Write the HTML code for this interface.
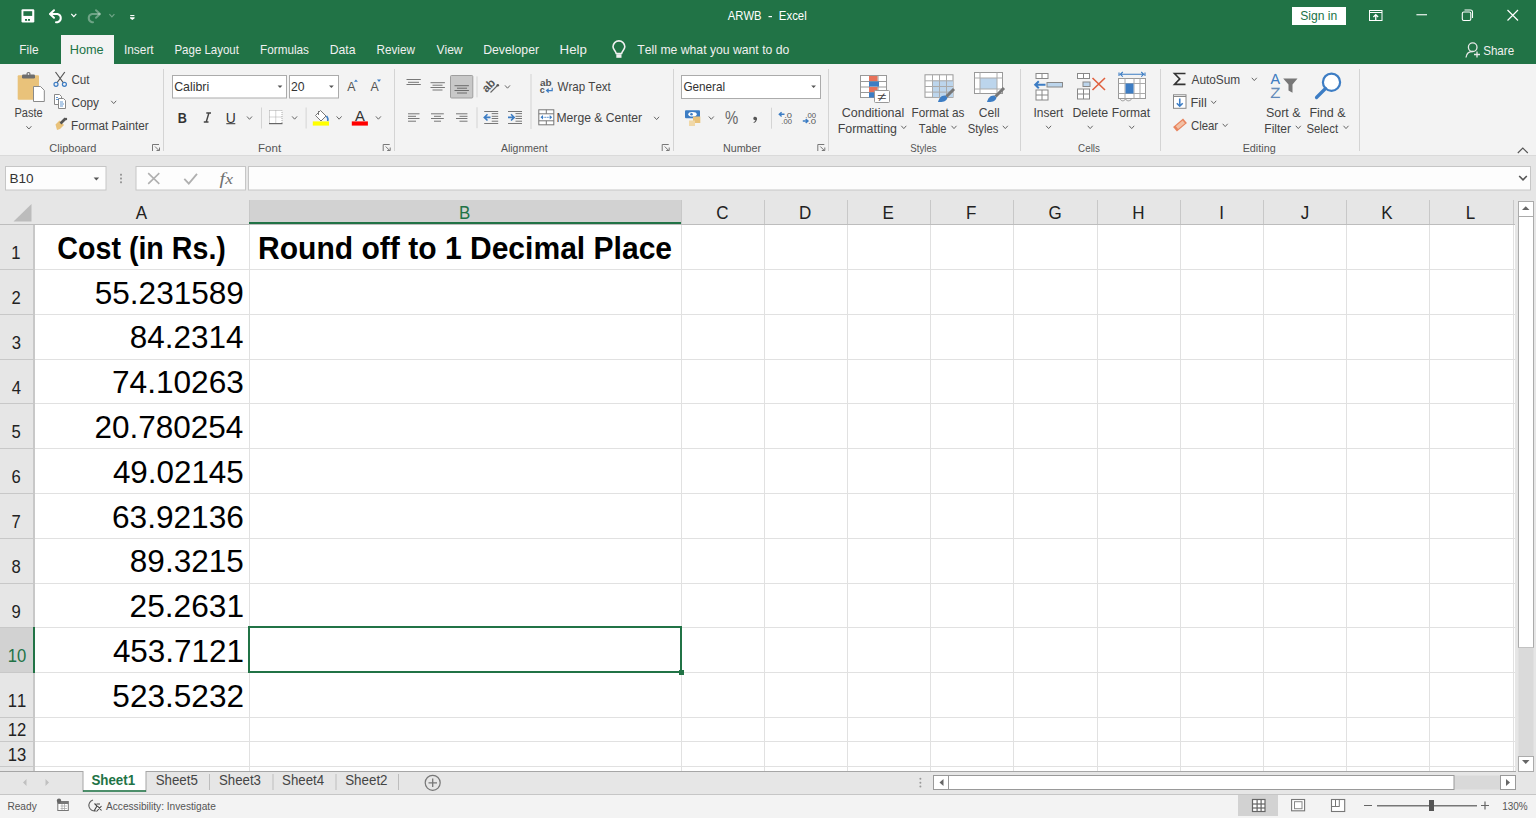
<!DOCTYPE html>
<html><head><meta charset="utf-8"><title>ARWB - Excel</title>
<style>
html,body{margin:0;padding:0;background:#e6e6e6;}
body{width:1536px;height:818px;overflow:hidden;}
svg{display:block;}
text{font-family:"Liberation Sans",sans-serif;font-kerning:none;white-space:pre;}
</style></head><body>
<svg width="1536" height="818" viewBox="0 0 1536 818">
<rect x="0" y="0" width="1536" height="64" fill="#217346" />
<rect x="0" y="64" width="1536" height="91" fill="#f3f3f3" />
<rect x="0" y="155" width="1536" height="1" fill="#dadada" />
<rect x="0" y="156" width="1536" height="615" fill="#e6e6e6" />
<rect x="61" y="35" width="53" height="30" fill="#f3f3f3" />
<g transform="translate(727.80 20.00) scale(0.9018 1.0000)"><text x="-0.02" y="0" font-size="12.50" font-weight="normal" fill="#ffffff">ARWB</text></g>
<rect x="768.5" y="16" width="3.5" height="1.2" fill="#ffffff" />
<g transform="translate(779.80 20.00) scale(0.9127 1.0000)"><text x="-1.03" y="0" font-size="12.50" font-weight="normal" fill="#ffffff">Excel</text></g>
<rect x="1292" y="7" width="54" height="18" fill="#ffffff" />
<g transform="translate(1300.80 20.00) scale(0.9690 1.0000)"><text x="-0.57" y="0" font-size="12.50" font-weight="normal" fill="#217346">Sign in</text></g>
<g transform="translate(20.30 54.00) scale(0.8914 1.0000)"><text x="-1.10" y="0" font-size="13.37" font-weight="normal" fill="#f0f0f0">File</text></g>
<g transform="translate(125.00 54.00) scale(0.8906 1.0000)"><text x="-1.23" y="0" font-size="13.37" font-weight="normal" fill="#f0f0f0">Insert</text></g>
<g transform="translate(175.40 54.00) scale(0.8593 1.0000)"><text x="-1.10" y="0" font-size="13.37" font-weight="normal" fill="#f0f0f0">Page Layout</text></g>
<g transform="translate(261.00 54.00) scale(0.8791 1.0000)"><text x="-1.10" y="0" font-size="13.37" font-weight="normal" fill="#f0f0f0">Formulas</text></g>
<g transform="translate(330.70 54.00) scale(0.9135 1.0000)"><text x="-1.10" y="0" font-size="13.37" font-weight="normal" fill="#f0f0f0">Data</text></g>
<g transform="translate(377.50 54.00) scale(0.8766 1.0000)"><text x="-1.10" y="0" font-size="13.37" font-weight="normal" fill="#f0f0f0">Review</text></g>
<g transform="translate(436.50 54.00) scale(0.9013 1.0000)"><text x="-0.06" y="0" font-size="13.37" font-weight="normal" fill="#f0f0f0">View</text></g>
<g transform="translate(484.20 54.00) scale(0.9173 1.0000)"><text x="-1.10" y="0" font-size="13.37" font-weight="normal" fill="#f0f0f0">Developer</text></g>
<g transform="translate(560.70 54.00) scale(0.9906 1.0000)"><text x="-1.10" y="0" font-size="13.37" font-weight="normal" fill="#f0f0f0">Help</text></g>
<g transform="translate(637.60 54.00) scale(0.9135 1.0000)"><text x="-0.30" y="0" font-size="13.37" font-weight="normal" fill="#f0f0f0">Tell me what you want to do</text></g>
<g transform="translate(1483.70 55.00) scale(0.8671 1.0000)"><text x="-0.61" y="0" font-size="13.37" font-weight="normal" fill="#f0f0f0">Share</text></g>
<g transform="translate(70.80 54.00) scale(0.9506 1.0000)"><text x="-1.10" y="0" font-size="13.37" font-weight="normal" fill="#217346">Home</text></g>
<g transform="translate(72.00 83.70) scale(0.9568 1.0000)"><text x="-0.62" y="0" font-size="12.21" font-weight="normal" fill="#444444">Cut</text></g>
<g transform="translate(72.00 106.60) scale(0.9692 1.0000)"><text x="-0.62" y="0" font-size="12.21" font-weight="normal" fill="#444444">Copy</text></g>
<g transform="translate(72.00 129.60) scale(0.9618 1.0000)"><text x="-1.00" y="0" font-size="12.21" font-weight="normal" fill="#444444">Format Painter</text></g>
<g transform="translate(15.40 116.50) scale(0.9030 1.0000)"><text x="-1.00" y="0" font-size="12.21" font-weight="normal" fill="#444444">Paste</text></g>
<g transform="translate(557.50 91.20) scale(0.9490 1.0000)"><text x="-0.05" y="0" font-size="12.21" font-weight="normal" fill="#444444">Wrap Text</text></g>
<g transform="translate(557.50 122.20) scale(0.9944 1.0000)"><text x="-1.00" y="0" font-size="12.21" font-weight="normal" fill="#444444">Merge &amp; Center</text></g>
<g transform="translate(1191.50 83.70) scale(0.9718 1.0000)"><text x="-0.02" y="0" font-size="12.21" font-weight="normal" fill="#444444">AutoSum</text></g>
<g transform="translate(1191.50 106.60) scale(1.0452 1.0000)"><text x="-1.00" y="0" font-size="12.21" font-weight="normal" fill="#444444">Fill</text></g>
<g transform="translate(1191.50 129.60) scale(0.9346 1.0000)"><text x="-0.62" y="0" font-size="12.21" font-weight="normal" fill="#444444">Clear</text></g>
<g transform="translate(842.30 116.70) scale(1.0259 1.0000)"><text x="-0.62" y="0" font-size="12.21" font-weight="normal" fill="#444444">Conditional</text></g>
<g transform="translate(838.70 132.60) scale(1.0165 1.0000)"><text x="-1.00" y="0" font-size="12.21" font-weight="normal" fill="#444444">Formatting</text></g>
<g transform="translate(912.50 116.70) scale(0.9624 1.0000)"><text x="-1.00" y="0" font-size="12.21" font-weight="normal" fill="#444444">Format as</text></g>
<g transform="translate(919.00 132.60) scale(0.9083 1.0000)"><text x="-0.27" y="0" font-size="12.21" font-weight="normal" fill="#444444">Table</text></g>
<g transform="translate(979.30 116.70) scale(0.9951 1.0000)"><text x="-0.62" y="0" font-size="12.21" font-weight="normal" fill="#444444">Cell</text></g>
<g transform="translate(968.20 132.60) scale(0.9240 1.0000)"><text x="-0.55" y="0" font-size="12.21" font-weight="normal" fill="#444444">Styles</text></g>
<g transform="translate(1034.60 116.70) scale(0.9789 1.0000)"><text x="-1.13" y="0" font-size="12.21" font-weight="normal" fill="#444444">Insert</text></g>
<g transform="translate(1073.40 116.70) scale(1.0163 1.0000)"><text x="-1.00" y="0" font-size="12.21" font-weight="normal" fill="#444444">Delete</text></g>
<g transform="translate(1112.80 116.70) scale(0.9900 1.0000)"><text x="-1.00" y="0" font-size="12.21" font-weight="normal" fill="#444444">Format</text></g>
<g transform="translate(1266.50 116.70) scale(1.0216 1.0000)"><text x="-0.55" y="0" font-size="12.21" font-weight="normal" fill="#444444">Sort &amp;</text></g>
<g transform="translate(1265.30 132.60) scale(0.9835 1.0000)"><text x="-1.00" y="0" font-size="12.21" font-weight="normal" fill="#444444">Filter</text></g>
<g transform="translate(1310.40 116.70) scale(1.0236 1.0000)"><text x="-1.00" y="0" font-size="12.21" font-weight="normal" fill="#444444">Find &amp;</text></g>
<g transform="translate(1306.90 132.60) scale(0.9342 1.0000)"><text x="-0.55" y="0" font-size="12.21" font-weight="normal" fill="#444444">Select</text></g>
<g transform="translate(49.90 151.80) scale(0.9477 1.0000)"><text x="-0.59" y="0" font-size="11.63" font-weight="normal" fill="#555555">Clipboard</text></g>
<g transform="translate(259.00 151.80) scale(0.9897 1.0000)"><text x="-0.95" y="0" font-size="11.63" font-weight="normal" fill="#555555">Font</text></g>
<g transform="translate(501.00 151.80) scale(0.9012 1.0000)"><text x="-0.02" y="0" font-size="11.63" font-weight="normal" fill="#555555">Alignment</text></g>
<g transform="translate(723.80 151.80) scale(0.9251 1.0000)"><text x="-0.95" y="0" font-size="11.63" font-weight="normal" fill="#555555">Number</text></g>
<g transform="translate(910.70 151.80) scale(0.8334 1.0000)"><text x="-0.53" y="0" font-size="11.63" font-weight="normal" fill="#555555">Styles</text></g>
<g transform="translate(1078.60 151.80) scale(0.8456 1.0000)"><text x="-0.59" y="0" font-size="11.63" font-weight="normal" fill="#555555">Cells</text></g>
<g transform="translate(1243.50 151.80) scale(0.9305 1.0000)"><text x="-0.95" y="0" font-size="11.63" font-weight="normal" fill="#555555">Editing</text></g>
<rect x="163" y="69" width="1" height="82" fill="#d4d4d4" />
<rect x="394" y="69" width="1" height="82" fill="#d4d4d4" />
<rect x="673" y="69" width="1" height="82" fill="#d4d4d4" />
<rect x="828" y="69" width="1" height="82" fill="#d4d4d4" />
<rect x="1020" y="69" width="1" height="82" fill="#d4d4d4" />
<rect x="1160" y="69" width="1" height="82" fill="#d4d4d4" />
<rect x="1359" y="69" width="1" height="82" fill="#d4d4d4" />
<rect x="5.5" y="166.5" width="100.5" height="23.5" fill="#fdfdfd" stroke="#c6c6c6" stroke-width="1"/>
<g transform="translate(10.50 183.00) scale(1.0372 1.0000)"><text x="-1.07" y="0" font-size="13.08" font-weight="normal" fill="#333333">B10</text></g>
<rect x="136" y="166.5" width="109.5" height="23.5" fill="#fdfdfd" stroke="#c6c6c6" stroke-width="1"/>
<rect x="248.5" y="166.5" width="1282" height="23.5" fill="#fdfdfd" stroke="#c6c6c6" stroke-width="1"/>
<rect x="34" y="225" width="1481" height="546" fill="#ffffff" />
<rect x="249" y="225" width="1" height="546" fill="#e1e1e1" />
<rect x="681" y="225" width="1" height="546" fill="#e1e1e1" />
<rect x="764" y="225" width="1" height="546" fill="#e1e1e1" />
<rect x="847" y="225" width="1" height="546" fill="#e1e1e1" />
<rect x="930" y="225" width="1" height="546" fill="#e1e1e1" />
<rect x="1013" y="225" width="1" height="546" fill="#e1e1e1" />
<rect x="1097" y="225" width="1" height="546" fill="#e1e1e1" />
<rect x="1180" y="225" width="1" height="546" fill="#e1e1e1" />
<rect x="1263" y="225" width="1" height="546" fill="#e1e1e1" />
<rect x="1346" y="225" width="1" height="546" fill="#e1e1e1" />
<rect x="1429" y="225" width="1" height="546" fill="#e1e1e1" />
<rect x="1513" y="225" width="1" height="546" fill="#e1e1e1" />
<rect x="34" y="269" width="1481" height="1" fill="#e1e1e1" />
<rect x="34" y="314" width="1481" height="1" fill="#e1e1e1" />
<rect x="34" y="359" width="1481" height="1" fill="#e1e1e1" />
<rect x="34" y="403" width="1481" height="1" fill="#e1e1e1" />
<rect x="34" y="448" width="1481" height="1" fill="#e1e1e1" />
<rect x="34" y="493" width="1481" height="1" fill="#e1e1e1" />
<rect x="34" y="538" width="1481" height="1" fill="#e1e1e1" />
<rect x="34" y="583" width="1481" height="1" fill="#e1e1e1" />
<rect x="34" y="627" width="1481" height="1" fill="#e1e1e1" />
<rect x="34" y="672" width="1481" height="1" fill="#e1e1e1" />
<rect x="34" y="717" width="1481" height="1" fill="#e1e1e1" />
<rect x="34" y="741" width="1481" height="1" fill="#e1e1e1" />
<rect x="34" y="766" width="1481" height="1" fill="#e1e1e1" />
<rect x="249" y="200" width="432" height="24" fill="#d2d2d2" />
<rect x="249" y="200" width="1" height="24" fill="#c8c8c8" />
<rect x="681" y="200" width="1" height="24" fill="#c8c8c8" />
<rect x="764" y="200" width="1" height="24" fill="#c8c8c8" />
<rect x="847" y="200" width="1" height="24" fill="#c8c8c8" />
<rect x="930" y="200" width="1" height="24" fill="#c8c8c8" />
<rect x="1013" y="200" width="1" height="24" fill="#c8c8c8" />
<rect x="1097" y="200" width="1" height="24" fill="#c8c8c8" />
<rect x="1180" y="200" width="1" height="24" fill="#c8c8c8" />
<rect x="1263" y="200" width="1" height="24" fill="#c8c8c8" />
<rect x="1346" y="200" width="1" height="24" fill="#c8c8c8" />
<rect x="1429" y="200" width="1" height="24" fill="#c8c8c8" />
<rect x="1513" y="200" width="1" height="24" fill="#c8c8c8" />
<rect x="0" y="224" width="1515" height="1" fill="#bdbdbd" />
<rect x="249" y="222" width="432" height="2" fill="#217346" />
<g transform="translate(135.86 219.00) scale(0.9000 1.0000)"><text x="-0.04" y="0" font-size="18.90" font-weight="normal" fill="#222222">A</text></g>
<g transform="translate(460.47 219.00) scale(0.9000 1.0000)"><text x="-1.55" y="0" font-size="18.90" font-weight="normal" fill="#217346">B</text></g>
<g transform="translate(717.12 219.00) scale(0.9000 1.0000)"><text x="-0.96" y="0" font-size="18.90" font-weight="normal" fill="#222222">C</text></g>
<g transform="translate(800.46 219.00) scale(0.9000 1.0000)"><text x="-1.55" y="0" font-size="18.90" font-weight="normal" fill="#222222">D</text></g>
<g transform="translate(883.89 219.00) scale(0.9000 1.0000)"><text x="-1.55" y="0" font-size="18.90" font-weight="normal" fill="#222222">E</text></g>
<g transform="translate(967.34 219.00) scale(0.9000 1.0000)"><text x="-1.55" y="0" font-size="18.90" font-weight="normal" fill="#222222">F</text></g>
<g transform="translate(1049.45 219.00) scale(0.9000 1.0000)"><text x="-0.95" y="0" font-size="18.90" font-weight="normal" fill="#222222">G</text></g>
<g transform="translate(1133.75 219.00) scale(0.9000 1.0000)"><text x="-1.55" y="0" font-size="18.90" font-weight="normal" fill="#222222">H</text></g>
<g transform="translate(1220.71 219.00) scale(0.9000 1.0000)"><text x="-1.74" y="0" font-size="18.90" font-weight="normal" fill="#222222">I</text></g>
<g transform="translate(1301.01 219.00) scale(0.9000 1.0000)"><text x="-0.30" y="0" font-size="18.90" font-weight="normal" fill="#222222">J</text></g>
<g transform="translate(1382.62 219.00) scale(0.9000 1.0000)"><text x="-1.55" y="0" font-size="18.90" font-weight="normal" fill="#222222">K</text></g>
<g transform="translate(1467.25 219.00) scale(0.9000 1.0000)"><text x="-1.55" y="0" font-size="18.90" font-weight="normal" fill="#222222">L</text></g>
<rect x="0" y="627" width="33" height="45" fill="#d2d2d2" />
<rect x="33" y="225" width="2" height="546" fill="#c8c8c8" />
<rect x="33" y="627" width="2" height="46" fill="#217346" />
<rect x="0" y="269" width="33" height="1" fill="#c8c8c8" />
<rect x="0" y="314" width="33" height="1" fill="#c8c8c8" />
<rect x="0" y="359" width="33" height="1" fill="#c8c8c8" />
<rect x="0" y="403" width="33" height="1" fill="#c8c8c8" />
<rect x="0" y="448" width="33" height="1" fill="#c8c8c8" />
<rect x="0" y="493" width="33" height="1" fill="#c8c8c8" />
<rect x="0" y="538" width="33" height="1" fill="#c8c8c8" />
<rect x="0" y="583" width="33" height="1" fill="#c8c8c8" />
<rect x="0" y="627" width="33" height="1" fill="#c8c8c8" />
<rect x="0" y="672" width="33" height="1" fill="#c8c8c8" />
<rect x="0" y="717" width="33" height="1" fill="#c8c8c8" />
<rect x="0" y="741" width="33" height="1" fill="#c8c8c8" />
<rect x="0" y="766" width="33" height="1" fill="#c8c8c8" />
<path d="M31.5 204 L31.5 221.5 L13.5 221.5 Z" fill="#bcbcbc"/>
<g transform="translate(12.62 259.10) scale(0.8800 1.0000)"><text x="-1.44" y="0" font-size="18.90" font-weight="normal" fill="#222222">1</text></g>
<g transform="translate(12.41 303.90) scale(0.8800 1.0000)"><text x="-0.95" y="0" font-size="18.90" font-weight="normal" fill="#222222">2</text></g>
<g transform="translate(12.26 348.70) scale(0.8800 1.0000)"><text x="-0.72" y="0" font-size="18.90" font-weight="normal" fill="#222222">3</text></g>
<g transform="translate(12.01 393.50) scale(0.8800 1.0000)"><text x="-0.43" y="0" font-size="18.90" font-weight="normal" fill="#222222">4</text></g>
<g transform="translate(12.26 438.30) scale(0.8800 1.0000)"><text x="-0.76" y="0" font-size="18.90" font-weight="normal" fill="#222222">5</text></g>
<g transform="translate(12.36 483.10) scale(0.8800 1.0000)"><text x="-0.96" y="0" font-size="18.90" font-weight="normal" fill="#222222">6</text></g>
<g transform="translate(12.42 527.90) scale(0.8800 1.0000)"><text x="-0.97" y="0" font-size="18.90" font-weight="normal" fill="#222222">7</text></g>
<g transform="translate(12.30 572.70) scale(0.8800 1.0000)"><text x="-0.82" y="0" font-size="18.90" font-weight="normal" fill="#222222">8</text></g>
<g transform="translate(12.36 617.50) scale(0.8800 1.0000)"><text x="-0.89" y="0" font-size="18.90" font-weight="normal" fill="#222222">9</text></g>
<g transform="translate(9.01 662.30) scale(0.8800 1.0000)"><text x="-1.44" y="0" font-size="18.90" font-weight="normal" fill="#217346">10</text></g>
<g transform="translate(9.09 707.10) scale(0.8800 1.0000)"><text x="-1.44" y="0" font-size="18.90" font-weight="normal" fill="#222222">11</text></g>
<g transform="translate(9.10 736.00) scale(0.8800 1.0000)"><text x="-1.44" y="0" font-size="18.90" font-weight="normal" fill="#222222">12</text></g>
<g transform="translate(9.05 760.60) scale(0.8800 1.0000)"><text x="-1.44" y="0" font-size="18.90" font-weight="normal" fill="#222222">13</text></g>
<g transform="translate(58.50 259.10) scale(0.9077 1.0000)"><text x="-1.29" y="0" font-size="31.54" font-weight="bold" fill="#000000">Cost (in Rs.)</text></g>
<g transform="translate(260.00 259.10) scale(0.9530 1.0000)"><text x="-2.11" y="0" font-size="31.54" font-weight="bold" fill="#000000">Round off to 1 Decimal Place</text></g>
<g transform="translate(96.00 303.50) scale(1.0199 1.0000)"><text x="-1.24" y="0" font-size="30.96" font-weight="normal" fill="#000000">55.231589</text></g>
<g transform="translate(131.20 348.30) scale(1.0150 1.0000)"><text x="-1.35" y="0" font-size="30.96" font-weight="normal" fill="#000000">84.2314</text></g>
<g transform="translate(113.60 393.10) scale(1.0215 1.0000)"><text x="-1.59" y="0" font-size="30.96" font-weight="normal" fill="#000000">74.10263</text></g>
<g transform="translate(96.00 437.90) scale(1.0182 1.0000)"><text x="-1.56" y="0" font-size="30.96" font-weight="normal" fill="#000000">20.780254</text></g>
<g transform="translate(113.60 482.70) scale(1.0140 1.0000)"><text x="-0.71" y="0" font-size="30.96" font-weight="normal" fill="#000000">49.02145</text></g>
<g transform="translate(113.60 527.50) scale(1.0214 1.0000)"><text x="-1.57" y="0" font-size="30.96" font-weight="normal" fill="#000000">63.92136</text></g>
<g transform="translate(131.20 572.30) scale(1.0186 1.0000)"><text x="-1.35" y="0" font-size="30.96" font-weight="normal" fill="#000000">89.3215</text></g>
<g transform="translate(131.20 617.10) scale(1.0226 1.0000)"><text x="-1.56" y="0" font-size="30.96" font-weight="normal" fill="#000000">25.2631</text></g>
<g transform="translate(113.60 661.90) scale(1.0157 1.0000)"><text x="-0.71" y="0" font-size="30.96" font-weight="normal" fill="#000000">453.7121</text></g>
<g transform="translate(113.60 706.70) scale(1.0203 1.0000)"><text x="-1.24" y="0" font-size="30.96" font-weight="normal" fill="#000000">523.5232</text></g>
<rect x="249" y="627" width="432" height="45" fill="none" stroke="#217346" stroke-width="2"/>
<rect x="679" y="670" width="5" height="5" fill="#217346" />
<rect x="0" y="771" width="1516" height="1" fill="#a6a6a6" />
<rect x="1518.5" y="201.5" width="15" height="15" fill="#ffffff" stroke="#ababab"/>
<path d="M1522 210 L1529.5 210 L1525.75 206.2 Z" fill="#666"/>
<rect x="1518.5" y="216.5" width="15" height="431" fill="#ffffff" stroke="#ababab"/>
<rect x="1518.5" y="647.5" width="15" height="109" fill="#dadada" />
<rect x="1518.5" y="756.5" width="15" height="15" fill="#ffffff" stroke="#ababab"/>
<path d="M1522 760 L1529.5 760 L1525.75 764 Z" fill="#666"/>
<rect x="0" y="772" width="1536" height="22" fill="#e6e6e6" />
<rect x="0" y="794" width="1536" height="1" fill="#c6c6c6" />
<rect x="83" y="771" width="63" height="21" fill="#ffffff" />
<rect x="82.5" y="771" width="1" height="21" fill="#a6a6a6" />
<rect x="145.5" y="771" width="1" height="21" fill="#a6a6a6" />
<rect x="83" y="790.2" width="63" height="1.6" fill="#217346" />
<g transform="translate(91.80 784.70) scale(0.9562 1.0000)"><text x="-0.40" y="0" font-size="13.95" font-weight="bold" fill="#217346">Sheet1</text></g>
<g transform="translate(156.30 784.70) scale(0.9534 1.0000)"><text x="-0.63" y="0" font-size="13.95" font-weight="normal" fill="#444444">Sheet5</text></g>
<g transform="translate(219.60 784.70) scale(0.9493 1.0000)"><text x="-0.63" y="0" font-size="13.95" font-weight="normal" fill="#444444">Sheet3</text></g>
<g transform="translate(282.70 784.70) scale(0.9506 1.0000)"><text x="-0.63" y="0" font-size="13.95" font-weight="normal" fill="#444444">Sheet4</text></g>
<g transform="translate(345.80 784.70) scale(0.9583 1.0000)"><text x="-0.63" y="0" font-size="13.95" font-weight="normal" fill="#444444">Sheet2</text></g>
<rect x="209" y="774" width="1" height="16" fill="#bdbdbd" />
<rect x="272.5" y="774" width="1" height="16" fill="#bdbdbd" />
<rect x="335.5" y="774" width="1" height="16" fill="#bdbdbd" />
<rect x="398" y="774" width="1" height="16" fill="#bdbdbd" />
<circle cx="432.7" cy="782.8" r="7.5" fill="none" stroke="#777" stroke-width="1.2"/>
<path d="M432.7 778.5 V787 M428.5 782.8 H437" stroke="#777" stroke-width="1.3"/>
<path d="M26.5 779 L23 782.5 L26.5 786 Z" fill="#c0c0c0"/>
<path d="M45.5 779 L49 782.5 L45.5 786 Z" fill="#c0c0c0"/>
<circle cx="920.4" cy="778.7" r="1" fill="#999"/><circle cx="920.4" cy="782.7" r="1" fill="#999"/><circle cx="920.4" cy="786.6" r="1" fill="#999"/>
<rect x="948" y="775.5" width="552" height="14" fill="#d9d9d9" />
<rect x="933.5" y="775.5" width="15" height="14" fill="#ffffff" stroke="#999"/>
<path d="M943.5 779 L939.5 782.5 L943.5 786 Z" fill="#666"/>
<rect x="948.5" y="775.5" width="505.5" height="14" fill="#ffffff" stroke="#999"/>
<rect x="1500.5" y="775.5" width="15" height="14" fill="#ffffff" stroke="#999"/>
<path d="M1506 779 L1510 782.5 L1506 786 Z" fill="#666"/>
<rect x="0" y="795" width="1536" height="23" fill="#f3f3f3" />
<g transform="translate(8.20 809.50) scale(0.9192 1.0000)"><text x="-0.91" y="0" font-size="11.05" font-weight="normal" fill="#555">Ready</text></g>
<g transform="translate(106.00 809.50) scale(0.9185 1.0000)"><text x="-0.02" y="0" font-size="11.05" font-weight="normal" fill="#555">Accessibility: Investigate</text></g>
<g transform="translate(1503.00 809.50) scale(0.9031 1.0000)"><text x="-0.84" y="0" font-size="11.05" font-weight="normal" fill="#555">130%</text></g>
<rect x="1238" y="795" width="40" height="21" fill="#d2d2d2" />
<path d="M1364 805.5 H1372 M1481 805.5 H1489 M1485 801.5 V809.5" stroke="#666" stroke-width="1.2"/>
<rect x="1377" y="805" width="100" height="1.5" fill="#777" />
<rect x="1429" y="800" width="5" height="11" fill="#555" />
<rect x="21.5" y="9.2" width="12.8" height="13.2" rx="1.2" fill="#ffffff"/>
<rect x="23.4" y="11.2" width="8.8" height="4.7" fill="#217346" />
<rect x="25" y="19" width="5" height="1.8" fill="#217346" />
<rect x="27" y="19" width="1" height="1.8" fill="#ffffff" />
<path d="M50.5 14 H57.5 A4.2 4.2 0 0 1 57.5 22.2 H56" stroke="#ffffff" stroke-width="2" fill="none" stroke-linecap="round"/>
<path d="M54 10.3 L50 14 L54 17.7" stroke="#ffffff" stroke-width="2" fill="none" stroke-linecap="round" stroke-linejoin="round"/>
<path d="M71.30 13.90 L73.80 16.70 L76.30 13.90" stroke="#ffffff" stroke-width="1.2" fill="none" />
<path d="M99.5 14 H92 A4.2 4.2 0 0 0 92 22.2 H93" stroke="rgba(255,255,255,0.35)" stroke-width="2" fill="none" stroke-linecap="round"/>
<path d="M96 10.3 L100 14 L96 17.7" stroke="rgba(255,255,255,0.35)" stroke-width="2" fill="none" stroke-linecap="round" stroke-linejoin="round"/>
<path d="M109.40 14.10 L111.90 16.90 L114.40 14.10" stroke="rgba(255,255,255,0.35)" stroke-width="1.2" fill="none" />
<rect x="130.2" y="15" width="4.2" height="1.1" fill="#ffffff" />
<path d="M130 17.2 H134.6 V18.3 L132.3 20 L130 18.3 Z" fill="#ffffff"/>
<rect x="1369.5" y="10.5" width="12.5" height="10" fill="none" stroke="#ffffff" stroke-width="1"/>
<rect x="1369.5" y="12" width="12.5" height="1" fill="#ffffff" />
<path d="M1375.75 20.5 V14.8 M1373.4 17 L1375.75 14.6 L1378.1 17" stroke="#ffffff" stroke-width="1.3" fill="none" />
<rect x="1416.4" y="14.2" width="10.6" height="1.1" fill="#ffffff" />
<rect x="1462.3" y="12" width="8.5" height="8.5" rx="1.5" fill="none" stroke="#ffffff" stroke-width="1.1"/>
<path d="M1464.5 10 H1470.5 A2 2 0 0 1 1472.5 12 V18" stroke="#ffffff" stroke-width="1.1" fill="none" />
<path d="M1507.5 10 L1518 20.5 M1518 10 L1507.5 20.5" stroke="#ffffff" stroke-width="1.2" fill="none" />
<path d="M616.2 53.5 C615.5 50.5 613 49.5 613 46.8 A5.9 5.9 0 0 1 624.8 46.8 C624.8 49.5 622.3 50.5 621.6 53.5 Z" stroke="#f0f0f0" stroke-width="1.6" fill="none" />
<rect x="616.3" y="54.2" width="5.2" height="3.6" fill="#f0f0f0" />
<circle cx="1472.7" cy="47.2" r="4.3" fill="none" stroke="#e8e8e8" stroke-width="1.3"/>
<path d="M1466 57.5 C1466.5 53.5 1469 51.5 1472.5 51.5" stroke="#e8e8e8" stroke-width="1.3" fill="none" />
<path d="M1477 51.5 V57.5 M1474 54.5 H1480" stroke="#e8e8e8" stroke-width="1.3" fill="none" />
<rect x="17.7" y="75.3" width="21.3" height="24.4" fill="#e9c27a" rx="1"/>
<rect x="22" y="74.6" width="13" height="3.8" rx="1.2" fill="#6e6e6e"/>
<circle cx="28.5" cy="74" r="2.1" fill="#6e6e6e"/>
<circle cx="28.5" cy="74" r="0.9" fill="#e9e9e9"/>
<path d="M33.5 86.5 H40.5 L44.3 90.3 V101.5 H33.5 Z" fill="#ffffff" stroke="#8a8a8a" stroke-width="1"/>
<path d="M26.40 126.20 L28.90 129.00 L31.40 126.20" stroke="#666666" stroke-width="1" fill="none" />
<path d="M55.5 72 L63.5 83 M64.8 72 L56.8 83" stroke="#555" stroke-width="1.2" fill="none" />
<circle cx="56" cy="84.3" r="2" fill="none" stroke="#3d7dc4" stroke-width="1.2"/>
<circle cx="64.4" cy="84.3" r="2" fill="none" stroke="#3d7dc4" stroke-width="1.2"/>
<path d="M54.5 94.5 H59.5 L61.5 96.5 V104.5 H54.5 Z" fill="#ffffff" stroke="#888" stroke-width="1"/>
<path d="M58.5 98.5 H63.5 L65.5 100.5 V108.5 H58.5 Z" fill="#ffffff" stroke="#888" stroke-width="1"/>
<path d="M56 97.5 H58 M56 99.5 H59 M60 102 H63 M60 104 H64 M60 106 H63" stroke="#3d7dc4" stroke-width="0.8" fill="none" />
<path d="M111.20 100.80 L113.70 103.60 L116.20 100.80" stroke="#666666" stroke-width="1" fill="none" />
<path d="M55.5 124.5 L59.5 120.5 L64 125 L60 129 L57 130 Z" fill="#e9c27a"/>
<path d="M60.5 123.5 L65.5 118.5" stroke="#555" stroke-width="2.6" fill="none" />
<circle cx="66" cy="119" r="1.2" fill="#555"/>
<rect x="172.5" y="75.5" width="114" height="22.5" fill="#ffffff" stroke="#ababab"/>
<rect x="289.5" y="75.5" width="49" height="22.5" fill="#ffffff" stroke="#ababab"/>
<g transform="translate(174.80 91.00) scale(0.9458 1.0000)"><text x="-0.66" y="0" font-size="13.08" font-weight="normal" fill="#333">Calibri</text></g>
<g transform="translate(291.50 91.10) scale(0.9446 1.0000)"><text x="-0.65" y="0" font-size="12.94" font-weight="normal" fill="#333">20</text></g>
<path d="M277.60 85.50 L282.40 85.50 L280.00 88.10 Z" fill="#555"/>
<path d="M329.00 85.50 L333.80 85.50 L331.40 88.10 Z" fill="#555"/>
<g transform="translate(347.30 91.10) scale(1.0376 1.0000)"><text x="-0.02" y="0" font-size="11.92" font-weight="normal" fill="#555">A</text></g>
<g transform="translate(370.40 91.10) scale(1.0376 1.0000)"><text x="-0.02" y="0" font-size="11.92" font-weight="normal" fill="#555">A</text></g>
<path d="M354 81.8 L357.9 81.8 L355.95 79.4 Z" fill="#3d7dc4"/>
<path d="M377 79.4 L381 79.4 L379 82 Z" fill="#3d7dc4"/>
<g transform="translate(178.70 122.50) scale(0.8686 1.0000)"><text x="-0.97" y="0" font-size="14.54" font-weight="bold" fill="#333">B</text></g>
<path d="M206.3 113 H211 M203.8 122 H208.5 M208.9 113 L206.2 122" stroke="#444" stroke-width="1.4" fill="none" />
<g transform="translate(226.80 122.50) scale(0.9571 1.0000)"><text x="-1.12" y="0" font-size="14.54" font-weight="normal" fill="#333">U</text></g>
<rect x="226.3" y="123.2" width="9" height="1" fill="#333" />
<path d="M247.00 116.50 L249.50 119.30 L252.00 116.50" stroke="#666666" stroke-width="1" fill="none" />
<rect x="261" y="107.5" width="1" height="21" fill="#d4d4d4" />
<rect x="269.5" y="110.5" width="12.5" height="13" fill="#ffffff" stroke="#aaa" stroke-dasharray="1 1"/>
<path d="M275.75 110.5 V123.5 M269.5 117 H282" stroke="#aaa" stroke-width="1" fill="none" stroke-dasharray="1 1"/>
<rect x="269" y="123" width="13.5" height="1.2" fill="#666" />
<path d="M292.10 116.40 L294.60 119.20 L297.10 116.40" stroke="#666666" stroke-width="1" fill="none" />
<rect x="305.6" y="107.5" width="1" height="21" fill="#d4d4d4" />
<path d="M315.5 115.5 L320.5 110.5 L326 116 L321 121 Z" fill="#ffffff" stroke="#777" stroke-width="1"/>
<path d="M318.5 111 V115" stroke="#777" stroke-width="1" fill="none" />
<path d="M326.5 116 C328 118 328.5 119.5 327.5 121" stroke="#3d7dc4" stroke-width="1.6" fill="none" />
<rect x="312.8" y="121.4" width="16.2" height="4.2" fill="#ffff00" />
<path d="M336.60 116.40 L339.10 119.20 L341.60 116.40" stroke="#666666" stroke-width="1" fill="none" />
<g transform="translate(355.10 120.50) scale(0.9684 1.0000)"><text x="-0.03" y="0" font-size="15.26" font-weight="normal" fill="#333">A</text></g>
<rect x="351.8" y="121.4" width="16.1" height="4.2" fill="#ff0000" />
<path d="M375.90 116.40 L378.40 119.20 L380.90 116.40" stroke="#666666" stroke-width="1" fill="none" />
<rect x="406.5" y="79" width="14.3" height="1" fill="#777" />
<rect x="408.0" y="81.8" width="11" height="1" fill="#777" />
<rect x="406.5" y="84" width="14.3" height="1" fill="#777" />
<rect x="430.5" y="82.2" width="14.4" height="1" fill="#777" />
<rect x="432.5" y="84.7" width="10" height="1" fill="#777" />
<rect x="430.5" y="87" width="14.4" height="1" fill="#777" />
<rect x="432.5" y="89.5" width="10" height="1" fill="#777" />
<rect x="450.5" y="75.5" width="22.3" height="22.5" rx="1" fill="#c8c8c8" stroke="#9e9e9e"/>
<rect x="454.5" y="85.2" width="14.4" height="1" fill="#6a6a6a" />
<rect x="457.0" y="87.7" width="10" height="1" fill="#6a6a6a" />
<rect x="454.5" y="90" width="14.4" height="1" fill="#6a6a6a" />
<rect x="457.0" y="92.5" width="10" height="1" fill="#6a6a6a" />
<rect x="476.5" y="76.4" width="1" height="21" fill="#d4d4d4" />
<rect x="476.5" y="107.2" width="1" height="21" fill="#d4d4d4" />
<g transform="translate(488.5 85.3) rotate(-45)"><text x="-6.8" y="4" font-size="11.5" font-weight="bold" fill="#555">ab</text></g>
<path d="M490.5 92.5 L497.5 85.5" stroke="#666" stroke-width="1.1" fill="none" />
<circle cx="497.8" cy="85.2" r="1.3" fill="#555"/>
<path d="M505.00 85.40 L507.50 88.20 L510.00 85.40" stroke="#666666" stroke-width="1" fill="none" />
<rect x="408.0" y="113.3" width="11.5" height="1" fill="#777" />
<rect x="408.0" y="115.8" width="8" height="1" fill="#777" />
<rect x="408.0" y="118" width="11.5" height="1" fill="#777" />
<rect x="408.0" y="120.7" width="8" height="1" fill="#777" />
<rect x="431.0" y="113.3" width="12.8" height="1" fill="#777" />
<rect x="434.0" y="115.8" width="7" height="1" fill="#777" />
<rect x="431.0" y="118" width="12.8" height="1" fill="#777" />
<rect x="434.0" y="120.7" width="7" height="1" fill="#777" />
<rect x="456.0" y="113.3" width="11.4" height="1" fill="#777" />
<rect x="459.5" y="115.8" width="8" height="1" fill="#777" />
<rect x="456.0" y="118" width="11.4" height="1" fill="#777" />
<rect x="459.5" y="120.7" width="8" height="1" fill="#777" />
<rect x="484.2" y="111" width="14" height="1" fill="#777" />
<rect x="484.2" y="123" width="14" height="1" fill="#777" />
<rect x="491.7" y="113.1" width="6.5" height="1" fill="#777" />
<rect x="491.7" y="115.8" width="6.5" height="1" fill="#777" />
<rect x="491.7" y="118" width="6.5" height="1" fill="#777" />
<rect x="491.7" y="120.7" width="6.5" height="1" fill="#777" />
<path d="M490.5 117.4 H484.5 M487.5 114.3 L484.3 117.4 L487.5 120.5" stroke="#3d7dc4" stroke-width="1.6" fill="none" />
<rect x="508" y="111" width="14" height="1" fill="#777" />
<rect x="508" y="123" width="14" height="1" fill="#777" />
<rect x="515.5" y="113.1" width="6.5" height="1" fill="#777" />
<rect x="515.5" y="115.8" width="6.5" height="1" fill="#777" />
<rect x="515.5" y="118" width="6.5" height="1" fill="#777" />
<rect x="515.5" y="120.7" width="6.5" height="1" fill="#777" />
<path d="M508 117.4 H514 M511 114.3 L514.2 117.4 L511 120.5" stroke="#3d7dc4" stroke-width="1.6" fill="none" />
<rect x="530.5" y="74" width="1" height="55" fill="#d4d4d4" />
<g transform="translate(540.20 86.30) scale(1.0558 1.0000)"><text x="-0.28" y="0" font-size="9.50" font-weight="bold" fill="#555">ab</text></g>
<g transform="translate(540.20 92.80) scale(0.9495 1.0000)"><text x="-0.37" y="0" font-size="9.50" font-weight="bold" fill="#555">c</text></g>
<path d="M552.2 87.8 V90.6 H546.8 M548.7 88.7 L546.6 90.6 L548.7 92.5" stroke="#3d7dc4" stroke-width="1.2" fill="none" />
<rect x="538.8" y="109.8" width="15" height="15" fill="#ffffff" stroke="#777"/>
<path d="M538.8 113.8 H553.8 M538.8 120.8 H553.8 M546.3 109.8 V113.8 M546.3 120.8 V124.8" stroke="#777" stroke-width="1" fill="none" />
<path d="M542 117.3 H550.5" stroke="#3d7dc4" stroke-width="1" fill="none" stroke-dasharray="1 0.6"/>
<path d="M540.5 117.3 L543 115 V119.6 Z M552.2 117.3 L549.7 115 V119.6 Z" fill="#3d7dc4"/>
<path d="M654.10 116.80 L656.60 119.60 L659.10 116.80" stroke="#666666" stroke-width="1" fill="none" />
<rect x="681.5" y="75.5" width="139" height="23" fill="#ffffff" stroke="#ababab"/>
<g transform="translate(684.00 91.00) scale(0.8977 1.0000)"><text x="-0.66" y="0" font-size="13.08" font-weight="normal" fill="#333">General</text></g>
<path d="M811.20 85.50 L816.00 85.50 L813.60 88.10 Z" fill="#555"/>
<rect x="685" y="110.3" width="15" height="8" rx="1" fill="#3d7dc4"/>
<ellipse cx="692.5" cy="114.3" rx="4.2" ry="2.3" fill="#ffffff"/>
<circle cx="691.5" cy="114.3" r="1.3" fill="#3d7dc4"/>
<rect x="693" y="116.5" width="7.3" height="6.5" fill="#e9c27a" />
<rect x="689" y="120.5" width="6" height="5.5" fill="#f0d8a8" />
<path d="M708.80 116.50 L711.30 119.30 L713.80 116.50" stroke="#666666" stroke-width="1" fill="none" />
<g transform="translate(725.60 123.60) scale(0.8344 1.0000)"><text x="-0.64" y="0" font-size="17.88" font-weight="normal" fill="#666">%</text></g>
<path d="M754 117 C756 116.5 757.5 117.5 757 119.5 C756.6 121 755.5 122.5 753.8 123 L753.5 122.3 C754.7 121.7 755.3 120.9 755.4 120.2 C754.3 120.3 753.3 119.6 753.3 118.6 C753.3 117.6 754 117 754 117 Z" fill="#555"/>
<rect x="771" y="107.7" width="1" height="21" fill="#d4d4d4" />
<g transform="translate(785.00 117.50) scale(1.1951 1.0000)"><text x="-0.72" y="0" font-size="7.85" font-weight="normal" fill="#555">.0</text></g>
<g transform="translate(782.00 124.20) scale(0.9709 1.0000)"><text x="-0.72" y="0" font-size="7.85" font-weight="normal" fill="#555">.00</text></g>
<path d="M784.5 114.3 H779.5 M781.6 112.2 L779.3 114.3 L781.6 116.4" stroke="#3d7dc4" stroke-width="1.4" fill="none" />
<g transform="translate(806.00 117.50) scale(0.9810 1.0000)"><text x="-0.72" y="0" font-size="7.85" font-weight="normal" fill="#555">.00</text></g>
<g transform="translate(809.00 124.20) scale(1.2132 1.0000)"><text x="-0.72" y="0" font-size="7.85" font-weight="normal" fill="#555">.0</text></g>
<path d="M802.8 121 H807.8 M805.7 118.9 L808 121 L805.7 123.1" stroke="#3d7dc4" stroke-width="1.4" fill="none" />
<path d="M152.5 151 V144.5 H159.0" stroke="#777" stroke-width="1" fill="none" />
<path d="M155.0 146.5 L159.0 150.5 M156.5 150.5 H159.5 V147.5" stroke="#777" stroke-width="1" fill="none" />
<path d="M383.2 151 V144.5 H389.7" stroke="#777" stroke-width="1" fill="none" />
<path d="M385.7 146.5 L389.7 150.5 M387.2 150.5 H390.2 V147.5" stroke="#777" stroke-width="1" fill="none" />
<path d="M662.2 151 V144.5 H668.7" stroke="#777" stroke-width="1" fill="none" />
<path d="M664.7 146.5 L668.7 150.5 M666.2 150.5 H669.2 V147.5" stroke="#777" stroke-width="1" fill="none" />
<path d="M817.8 151 V144.5 H824.3" stroke="#777" stroke-width="1" fill="none" />
<path d="M820.3 146.5 L824.3 150.5 M821.8 150.5 H824.8 V147.5" stroke="#777" stroke-width="1" fill="none" />
<rect x="860.5" y="75.5" width="26" height="22" fill="#ffffff" stroke="#999"/>
<rect x="860.5" y="81" width="26" height="1" fill="#999" />
<rect x="860.5" y="86.5" width="26" height="1" fill="#999" />
<rect x="860.5" y="92" width="26" height="1" fill="#999" />
<rect x="869" y="75.5" width="1" height="22" fill="#999" />
<rect x="877.5" y="75.5" width="1" height="22" fill="#999" />
<rect x="869" y="76" width="8.5" height="5" fill="#e8725a" />
<rect x="869" y="81.5" width="10" height="5" fill="#3d7dc4" />
<rect x="869" y="87" width="8.5" height="5" fill="#e8725a" />
<rect x="869" y="92.5" width="5" height="5" fill="#3d7dc4" />
<rect x="874.5" y="90.5" width="15" height="12" rx="1" fill="#ffffff" stroke="#999"/>
<g transform="translate(878.00 100.50) scale(1.3722 1.0000)"><text x="-0.38" y="0" font-size="12.00" font-weight="normal" fill="#444">≠</text></g>
<path d="M901.30 125.80 L903.80 128.60 L906.30 125.80" stroke="#666666" stroke-width="1" fill="none" />
<rect x="925" y="74.8" width="28" height="22.5" fill="#ffffff" stroke="#999"/>
<rect x="932" y="80.5" width="21" height="16.5" fill="#bcd5ec" />
<rect x="925" y="80.3" width="28" height="1" fill="#aaa" />
<rect x="925" y="86" width="28" height="1" fill="#aaa" />
<rect x="925" y="91.6" width="28" height="1" fill="#aaa" />
<rect x="932" y="74.8" width="1" height="22.5" fill="#aaa" />
<rect x="939" y="74.8" width="1" height="22.5" fill="#aaa" />
<rect x="946" y="74.8" width="1" height="22.5" fill="#aaa" />
<path d="M938 102 C939 98 941.5 95 945.5 95.5 L947.5 97.5 C947 101 943 102.5 938 102 Z" fill="#3d7dc4"/>
<path d="M946.5 96.5 L954 89" stroke="#777" stroke-width="3" fill="none" />
<path d="M951.50 125.80 L954.00 128.60 L956.50 125.80" stroke="#666666" stroke-width="1" fill="none" />
<rect x="974.5" y="72.5" width="28" height="21" fill="#ffffff" stroke="#999"/>
<rect x="980" y="78" width="17" height="11" fill="#bcd5ec" />
<path d="M974.5 78 H1002.5 M974.5 89 H1002.5 M980 72.5 V93.5 M997 72.5 V93.5" stroke="#aaa" stroke-width="1" fill="none" />
<path d="M987 102 C988 98 990.5 95 994.5 95.5 L996.5 97.5 C996 101 992 102.5 987 102 Z" fill="#3d7dc4"/>
<path d="M995.5 96.5 L1004 88" stroke="#777" stroke-width="3" fill="none" />
<path d="M1002.80 125.80 L1005.30 128.60 L1007.80 125.80" stroke="#666666" stroke-width="1" fill="none" />
<rect x="1036" y="73.5" width="12" height="5" fill="#fff" stroke="#888"/>
<path d="M1042 73.5 V78.5" stroke="#888" stroke-width="1" fill="none" />
<rect x="1036" y="90" width="12" height="10" fill="#fff" stroke="#888"/>
<path d="M1042 90 V100 M1036 95 H1048" stroke="#888" stroke-width="1" fill="none" />
<rect x="1047" y="82.5" width="15.5" height="4.5" fill="#bcd5ec" stroke="#888"/>
<path d="M1045.5 84.8 H1035.5 M1038.8 81.3 L1035.2 84.8 L1038.8 88.3" stroke="#3d7dc4" stroke-width="2" fill="none" />
<path d="M1046.10 125.80 L1048.60 128.60 L1051.10 125.80" stroke="#666666" stroke-width="1" fill="none" />
<rect x="1077.5" y="73.5" width="12" height="5" fill="#fff" stroke="#888"/>
<path d="M1083.5 73.5 V78.5" stroke="#888" stroke-width="1" fill="none" />
<rect x="1077.5" y="89" width="12" height="10" fill="#fff" stroke="#888"/>
<path d="M1083.5 89 V99 M1077.5 94 H1089.5" stroke="#888" stroke-width="1" fill="none" />
<rect x="1083" y="82" width="7" height="4.5" fill="#bcd5ec" stroke="#888"/>
<path d="M1092.5 78 L1105 90 M1105 78 L1092.5 90" stroke="#e0603e" stroke-width="1.6" fill="none" />
<path d="M1087.70 125.80 L1090.20 128.60 L1092.70 125.80" stroke="#666666" stroke-width="1" fill="none" />
<path d="M1119 72.5 V76 M1145 72.5 V76 M1120.5 74.3 H1143.5 M1122.8 72 L1120.3 74.3 L1122.8 76.6 M1141.2 72 L1143.7 74.3 L1141.2 76.6" stroke="#3d7dc4" stroke-width="1.1" fill="none" />
<rect x="1118.5" y="78.5" width="27" height="20" fill="#fff" stroke="#999"/>
<path d="M1118.5 83.5 H1145.5 M1118.5 93.5 H1145.5 M1125 78.5 V98.5 M1134 78.5 V98.5 M1140 78.5 V98.5" stroke="#aaa" stroke-width="1" fill="none" />
<rect x="1125.5" y="83.5" width="8" height="10" fill="#3d7dc4" />
<path d="M1120 98.5 C1121 101.5 1124 101.5 1125.5 99 C1127 101.5 1130 101.5 1132 98.5" stroke="#999" stroke-width="1" fill="none" />
<path d="M1129.20 125.80 L1131.70 128.60 L1134.20 125.80" stroke="#666666" stroke-width="1" fill="none" />
<path d="M1185.5 73.5 H1174.5 L1179.8 78.9 L1174.5 84.4 H1185.5" stroke="#333" stroke-width="1.6" fill="none" />
<path d="M1251.80 77.80 L1254.30 80.60 L1256.80 77.80" stroke="#666666" stroke-width="1" fill="none" />
<rect x="1173.5" y="94.8" width="12.5" height="13.5" fill="#fff" stroke="#888"/>
<path d="M1173.5 96.5 H1186" stroke="#888" stroke-width="1" fill="none" />
<path d="M1179.75 98.5 V106 M1176.8 103.2 L1179.75 106.2 L1182.7 103.2" stroke="#3d7dc4" stroke-width="1.6" fill="none" />
<path d="M1211.20 100.80 L1213.70 103.60 L1216.20 100.80" stroke="#666666" stroke-width="1" fill="none" />
<g transform="translate(1180 125) rotate(-40)"><rect x="-6.5" y="-3" width="13" height="6" fill="#e8845e"/><rect x="-4" y="-1.8" width="9" height="3.6" fill="#f3c0a4"/></g>
<path d="M1222.70 123.80 L1225.20 126.60 L1227.70 123.80" stroke="#666666" stroke-width="1" fill="none" />
<g transform="translate(1270.60 84.20) scale(0.9387 1.0000)"><text x="-0.03" y="0" font-size="15.26" font-weight="normal" fill="#3d7dc4">A</text></g>
<g transform="translate(1270.80 97.80) scale(1.0884 1.0000)"><text x="-0.48" y="0" font-size="15.26" font-weight="normal" fill="#6a8db8">Z</text></g>
<path d="M1271.2 84 L1275.4 73.8 L1279.6 84 M1272.8 80.5 H1278 M1271.2 87.6 H1279.5 L1271.2 97.6 H1279.7" fill="none" stroke="#4a80c0" stroke-width="0.5" opacity="0.6"/>
<path d="M1283.2 78.6 H1297.5 L1292.5 84.5 V92.7 L1288.5 90.5 V84.5 Z" fill="#777"/>
<path d="M1295.80 125.80 L1298.30 128.60 L1300.80 125.80" stroke="#666666" stroke-width="1" fill="none" />
<circle cx="1331.5" cy="82.2" r="8.6" fill="#fff" stroke="#3d7dc4" stroke-width="2.2"/>
<path d="M1325.5 88.5 L1316.5 97.5" stroke="#3d7dc4" stroke-width="3.2" fill="none" stroke-linecap="round"/>
<path d="M1343.50 125.80 L1346.00 128.60 L1348.50 125.80" stroke="#666666" stroke-width="1" fill="none" />
<path d="M1517.8 153 L1522.8 148 L1527.8 153" stroke="#555" stroke-width="1.1" fill="none" />
<path d="M93.65 177.50 L99.15 177.50 L96.40 180.50 Z" fill="#555"/>
<rect x="120" y="173.8" width="2" height="1.8" fill="#999" />
<rect x="120" y="177.6" width="2" height="1.8" fill="#999" />
<rect x="120" y="181.4" width="2" height="1.8" fill="#999" />
<path d="M148.2 173.2 L159.3 183.8 M159.3 173.2 L148.2 183.8" stroke="#b0b0b0" stroke-width="1.6" fill="none" />
<path d="M184.3 178.8 L188.8 183.6 L197 173.8" stroke="#b0b0b0" stroke-width="1.8" fill="none" />
<g transform="translate(219.5 183.5) scale(1.25 1)"><text x="0" y="0" font-size="16" font-style="italic" style="font-family:'Liberation Serif',serif" fill="#707070">f<tspan font-size="14" dx="0.2">x</tspan></text></g>
<path d="M1519.2 176 L1523 179.8 L1526.8 176" stroke="#555" stroke-width="1.6" fill="none" />
<rect x="57.8" y="801.5" width="10.5" height="9" fill="#fff" stroke="#777"/>
<rect x="57.8" y="801.5" width="10.5" height="2.5" fill="#777" />
<circle cx="59" cy="800.8" r="2.2" fill="#666"/>
<path d="M60.5 806 H67 M60.5 808.5 H67 M62 804 V810 M64.5 804 V810" stroke="#aaa" stroke-width="0.8" fill="none" />
<path d="M93 800 A5.5 5.5 0 1 0 96 810.8" stroke="#666" stroke-width="1.1" fill="none" />
<path d="M94.5 803.5 L97 806 M96.5 804 H100 M97 806 L94 811 M97.5 806 L101.5 810.5 M101.5 806 L96.5 811.5" stroke="#444" stroke-width="1.1" fill="none" />
<rect x="1252.5" y="799.5" width="12.5" height="12" fill="#ffffff" stroke="#666" stroke-width="1.2"/>
<rect x="1256.5" y="799.5" width="1.2" height="12" fill="#666" />
<rect x="1260.5" y="799.5" width="1.2" height="12" fill="#666" />
<rect x="1252.5" y="803.4" width="12.5" height="1.2" fill="#666" />
<rect x="1252.5" y="807.4" width="12.5" height="1.2" fill="#666" />
<rect x="1291.6" y="799.5" width="13" height="11.3" fill="#ffffff" stroke="#777" stroke-width="1.1"/>
<rect x="1294.5" y="801.7" width="7.5" height="7" fill="none" stroke="#888" stroke-width="1"/>
<rect x="1331.5" y="799.5" width="13.2" height="12" fill="#ffffff" stroke="#777" stroke-width="1.1"/>
<path d="M1335.5 799.5 V806.5 H1339.3 V799.5 M1331.5 806.5 H1339.3" stroke="#777" stroke-width="1" fill="none" />
</svg>
</body></html>
